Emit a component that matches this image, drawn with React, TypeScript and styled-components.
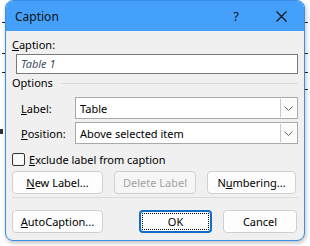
import styled, { createGlobalStyle } from 'styled-components';

const GlobalStyle = createGlobalStyle`
  html, body {
    margin: 0;
    padding: 0;
    background: #ffffff;
  }
  body {
    font-family: "Noto Sans", "Segoe UI", sans-serif;
    font-size: 11px;
    color: #000;
  }
`;

const Page = styled.div`
  display: grid;
  grid-template-columns: 5px 300px 5px;
  width: 310px;
  height: 246px;
  overflow: hidden;
`;

const Gutter = styled.svg`
  display: block;
  width: 5px;
  height: 246px;
`;

const Window = styled.div`
  display: flex;
  flex-direction: column;
  height: 241px;
  box-sizing: border-box;
  border: 1px solid #3a8ee6;
  border-radius: 8px;
  background: #f0f0f0;
  overflow: hidden;
  box-shadow: 1px 2px 4px rgba(0, 0, 0, 0.25);
`;

const TitleBar = styled.div`
  display: flex;
  align-items: center;
  height: 30px;
  flex-shrink: 0;
  background: #45a0fb;
  padding-left: 9px;
`;

const Title = styled.span`
  flex: 1;
  font-size: 12px;
  color: #111;
`;

const TitleButton = styled.div<{ $w: number }>`
  display: flex;
  align-items: center;
  justify-content: center;
  width: ${({ $w }) => $w}px;
  height: 30px;
  font-size: 13px;
  color: #111;
`;

const Body = styled.div`
  display: flex;
  flex-direction: column;
  padding: 0 6px;
`;

const FieldLabel = styled.div`
  height: 16px;
  margin-top: 6px;
  line-height: 16px;
`;

const TextInput = styled.div`
  height: 20px;
  box-sizing: border-box;
  border: 1px solid #7a7a7a;
  background: #fff;
  padding-left: 4px;
  margin: 1px 0 0 4px;
  line-height: 18px;
  font-style: italic;
  color: #445066;
`;

const GroupHeader = styled.div`
  display: flex;
  align-items: center;
  gap: 8px;
  height: 16px;
  margin-top: 1px;
  line-height: 16px;

  &::after {
    content: '';
    flex: 1;
    height: 1px;
    background: #dadada;
  }
`;

const FormRow = styled.div<{ $top: number }>`
  display: flex;
  align-items: center;
  margin-top: ${({ $top }) => $top}px;
  padding-left: 9px;
`;

const RowLabel = styled.div`
  width: 54px;
`;

const Select = styled.div`
  flex: 1;
  display: flex;
  align-items: center;
  height: 22px;
  box-sizing: border-box;
  border: 1px solid #a9a9a9;
  background: #fff;
`;

const SelectValue = styled.span`
  flex: 1;
  padding-left: 4px;
`;

const DropButton = styled.div`
  display: flex;
  align-items: center;
  justify-content: center;
  width: 16px;
  height: 18px;
  margin-right: 1px;
  box-sizing: border-box;
  border-left: 1px solid #c8c8c8;
  background: #fbfbfb;
`;

const CheckRow = styled.label`
  display: flex;
  align-items: center;
  gap: 4px;
  margin-top: 8px;
  height: 15px;
`;

const Box = styled.span`
  width: 13px;
  height: 13px;
  box-sizing: border-box;
  border: 1px solid #333;
  border-radius: 2px;
  background: #f8f8f8;
`;

const ButtonRow = styled.div<{ $top: number }>`
  display: flex;
  gap: 11px;
  margin-top: ${({ $top }) => $top}px;
`;

const Button = styled.div<{ $w: number; $disabled?: boolean; $default?: boolean; $left?: number }>`
  display: flex;
  align-items: center;
  justify-content: center;
  width: ${({ $w }) => $w}px;
  height: 23px;
  margin-left: ${({ $left }) => $left ?? 0}px;
  box-sizing: border-box;
  border: ${({ $default }) => ($default ? '2px solid #0f6cc7' : '1px solid #d0d0d0')};
  border-radius: 4px;
  background: ${({ $disabled }) => ($disabled ? '#f6f6f6' : '#fdfdfd')};
  color: ${({ $disabled }) => ($disabled ? '#a3a3a3' : '#000')};
  position: relative;
`;

const FocusRing = styled.span`
  position: absolute;
  inset: 1px;
  border: 1px dotted #000;
`;

const Separator = styled.div`
  height: 1px;
  background: #dadada;
  margin-top: 3px;
`;

const Chevron = () => (
  <svg width="9" height="5" viewBox="0 0 9 5">
    <path d="M0.5 0.5 L4.5 4.5 L8.5 0.5" fill="none" stroke="#6a6a6a" strokeWidth="1" />
  </svg>
);

const CloseIcon = () => (
  <svg width="11" height="11" viewBox="0 0 11 11">
    <path d="M0.5 0.5 L10.5 10.5 M10.5 0.5 L0.5 10.5" stroke="#111" strokeWidth="1.1" />
  </svg>
);

export default function App() {
  return (
    <>
      <GlobalStyle />
      <Page>
        <Gutter viewBox="0 0 5 246">
          {[22, 53, 72].map((y) => (
            <rect key={y} x="2" y={y} width="3" height="1" fill="#222" />
          ))}
          <rect x="0" y="129" width="3" height="5" fill="#333" />
        </Gutter>

        <Window>
          <TitleBar>
            <Title>Caption</Title>
            <TitleButton $w={18}>?</TitleButton>
            <TitleButton $w={25} />
            <TitleButton $w={22}>
              <CloseIcon />
            </TitleButton>
            <TitleButton $w={12} />
          </TitleBar>

          <Body>
            <FieldLabel>
              <u>C</u>aption:
            </FieldLabel>
            <TextInput>Table 1</TextInput>
            <GroupHeader>Options</GroupHeader>

            <FormRow $top={6}>
              <RowLabel>
                <u>L</u>abel:
              </RowLabel>
              <Select>
                <SelectValue>Table</SelectValue>
                <DropButton>
                  <Chevron />
                </DropButton>
              </Select>
            </FormRow>
            <FormRow $top={3}>
              <RowLabel>
                <u>P</u>osition:
              </RowLabel>
              <Select>
                <SelectValue>Above selected item</SelectValue>
                <DropButton>
                  <Chevron />
                </DropButton>
              </Select>
            </FormRow>

            <CheckRow>
              <Box />
              <span>
                <u>E</u>xclude label from caption
              </span>
            </CheckRow>

            <ButtonRow $top={4}>
              <Button $w={91}>
                <span>
                  <u>N</u>ew Label...
                </span>
              </Button>
              <Button $w={82} $disabled>
                Delete Label
              </Button>
              <Button $w={89}>
                <span>
                  N<u>u</u>mbering...
                </span>
              </Button>
            </ButtonRow>
            <Separator />
            <ButtonRow $top={12}>
              <Button $w={91}>
                <span>
                  <u>A</u>utoCaption...
                </span>
              </Button>
              <Button $w={73} $left={25} $default>
                <FocusRing />
                OK
              </Button>
              <Button $w={74}>Cancel</Button>
            </ButtonRow>
          </Body>
        </Window>

        <Gutter viewBox="0 0 5 246">
          {[22, 53, 72, 89].map((y) => (
            <rect key={y} x="0" y={y} width="3" height="1" fill="#222" />
          ))}
        </Gutter>
      </Page>
    </>
  );
}
